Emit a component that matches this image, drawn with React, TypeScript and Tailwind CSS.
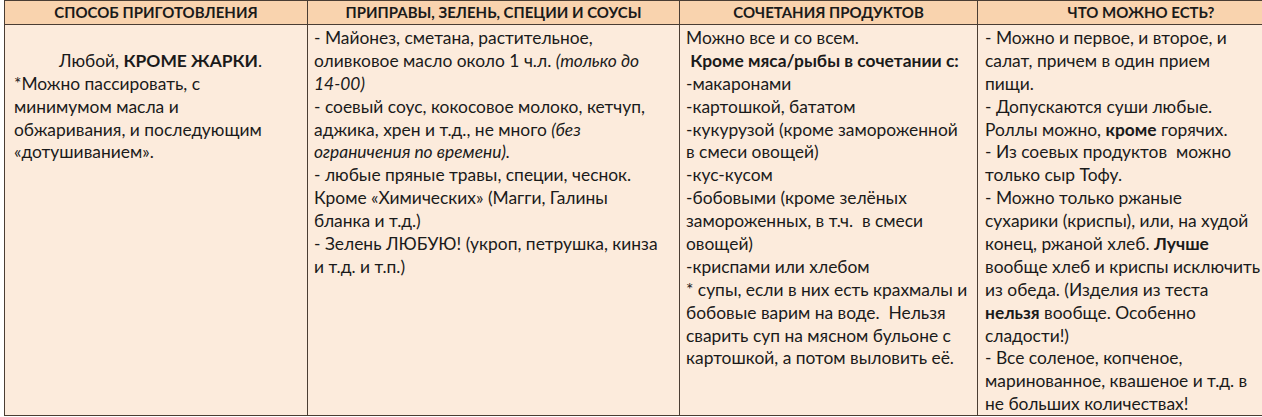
import React from "react";

type Seg = { t: string; b?: boolean; i?: boolean };
type Line = Seg[] | string;

const L = (...segs: (string | Seg)[]): Seg[] => segs.map((s) => (typeof s === "string" ? { t: s } : s));

function Lines({ lines, center = false }: { lines: Line[]; center?: boolean }) {
  return (
    <div className={center ? "text-center" : ""}>
      {lines.map((ln, i) => {
        const segs = typeof ln === "string" ? [{ t: ln }] : ln;
        return (
          <div key={i} className="whitespace-pre h-[22.9px] leading-[22.9px]">
            {segs.map((s, j) => (
              <span key={j} className={(s.b ? "font-bold " : "") + (s.i ? "italic" : "")}>
                {s.t}
              </span>
            ))}
            {segs.length === 0 || (segs.length === 1 && segs[0].t === "") ? "\u00a0" : null}
          </div>
        );
      })}
    </div>
  );
}

const col1: Line[] = [
  "",
  L("Любой, ", { t: "КРОМЕ ЖАРКИ", b: true }, "."),
];
const col1b: Line[] = [
  "*Можно пассировать, с",
  "минимумом масла и",
  "обжаривания, и последующим",
  "«дотушиванием».",
];

const col2: Line[] = [
  "- Майонез, сметана, растительное,",
  L("оливковое масло около 1 ч.л. ", { t: "(только до", i: true }),
  L({ t: "14-00)", i: true }),
  "- соевый соус, кокосовое молоко, кетчуп,",
  L("аджика, хрен и т.д., не много ", { t: "(без", i: true }),
  L({ t: "ограничения по времени).", i: true }),
  "- любые пряные травы, специи, чеснок.",
  "Кроме «Химических» (Магги, Галины",
  "бланка и т.д.)",
  "- Зелень ЛЮБУЮ! (укроп, петрушка, кинза",
  "и т.д. и т.п.)",
];

const col3: Line[] = [
  "Можно все и со всем.",
  L({ t: " Кроме мяса/рыбы в сочетании с:", b: true }),
  "-макаронами",
  "-картошкой, бататом",
  "-кукурузой (кроме замороженной",
  "в смеси овощей)",
  "-кус-кусом",
  "-бобовыми (кроме зелёных",
  "замороженных, в т.ч.  в смеси",
  "овощей)",
  "-криспами или хлебом",
  "* супы, если в них есть крахмалы и",
  "бобовые варим на воде.  Нельзя",
  "сварить суп на мясном бульоне с",
  "картошкой, а потом выловить её.",
];

const col4: Line[] = [
  "- Можно и первое, и второе, и",
  "салат, причем в один прием",
  "пищи.",
  "- Допускаются суши любые.",
  L("Роллы можно, ", { t: "кроме", b: true }, " горячих."),
  "- Из соевых продуктов  можно",
  "только сыр Тофу.",
  "- Можно только ржаные",
  "сухарики (криспы), или, на худой",
  L("конец, ржаной хлеб. ", { t: "Лучше", b: true }),
  "вообще хлеб и криспы исключить",
  "из обеда. (Изделия из теста",
  L({ t: "нельзя", b: true }, " вообще. Особенно"),
  "сладости!)",
  "- Все соленое, копченое,",
  "маринованное, квашеное и т.д. в",
  "не больших количествах!",
];

const headers = [
  "СПОСОБ ПРИГОТОВЛЕНИЯ",
  "ПРИПРАВЫ, ЗЕЛЕНЬ, СПЕЦИИ И СОУСЫ",
  "СОЧЕТАНИЯ ПРОДУКТОВ",
  "ЧТО МОЖНО ЕСТЬ?",
];

export default function App() {
  return (
    <div className="w-[1262px] h-[417px] overflow-hidden bg-white pl-[4px] pt-0 font-['Lato','Noto_Sans',sans-serif] text-[#1a1a1a]">
      <div className="grid w-[1300px] grid-cols-[303px_372px_298px_327px] grid-rows-[24px_391px] border-t-[1.5px] border-l-[1.5px] border-[#4a3d33]">
        {headers.map((h) => (
          <div
            key={h}
            className="flex items-center justify-center border-r-[1.5px] border-b-[1.5px] border-[#4a3d33] bg-[#f9d3ae] text-[15px] font-bold leading-none"
          >
            {h}
          </div>
        ))}
        <div className="border-r-[1.5px] border-b-[1.5px] border-[#4a3d33] bg-[#fcebdc] pt-[2px] pl-[9px] text-[17.4px]">
          <Lines lines={col1} center />
          <Lines lines={col1b} />
        </div>
        <div className="border-r-[1.5px] border-b-[1.5px] border-[#4a3d33] bg-[#fcebdc] pt-[2px] pl-[6px] text-[17.4px]">
          <Lines lines={col2} />
        </div>
        <div className="border-r-[1.5px] border-b-[1.5px] border-[#4a3d33] bg-[#fcebdc] pt-[2px] pl-[6px] text-[17.4px]">
          <Lines lines={col3} />
        </div>
        <div className="border-r-[1.5px] border-b-[1.5px] border-[#4a3d33] bg-[#fcebdc] pt-[2px] pl-[7px] text-[17.4px]">
          <Lines lines={col4} />
        </div>
      </div>
    </div>
  );
}
